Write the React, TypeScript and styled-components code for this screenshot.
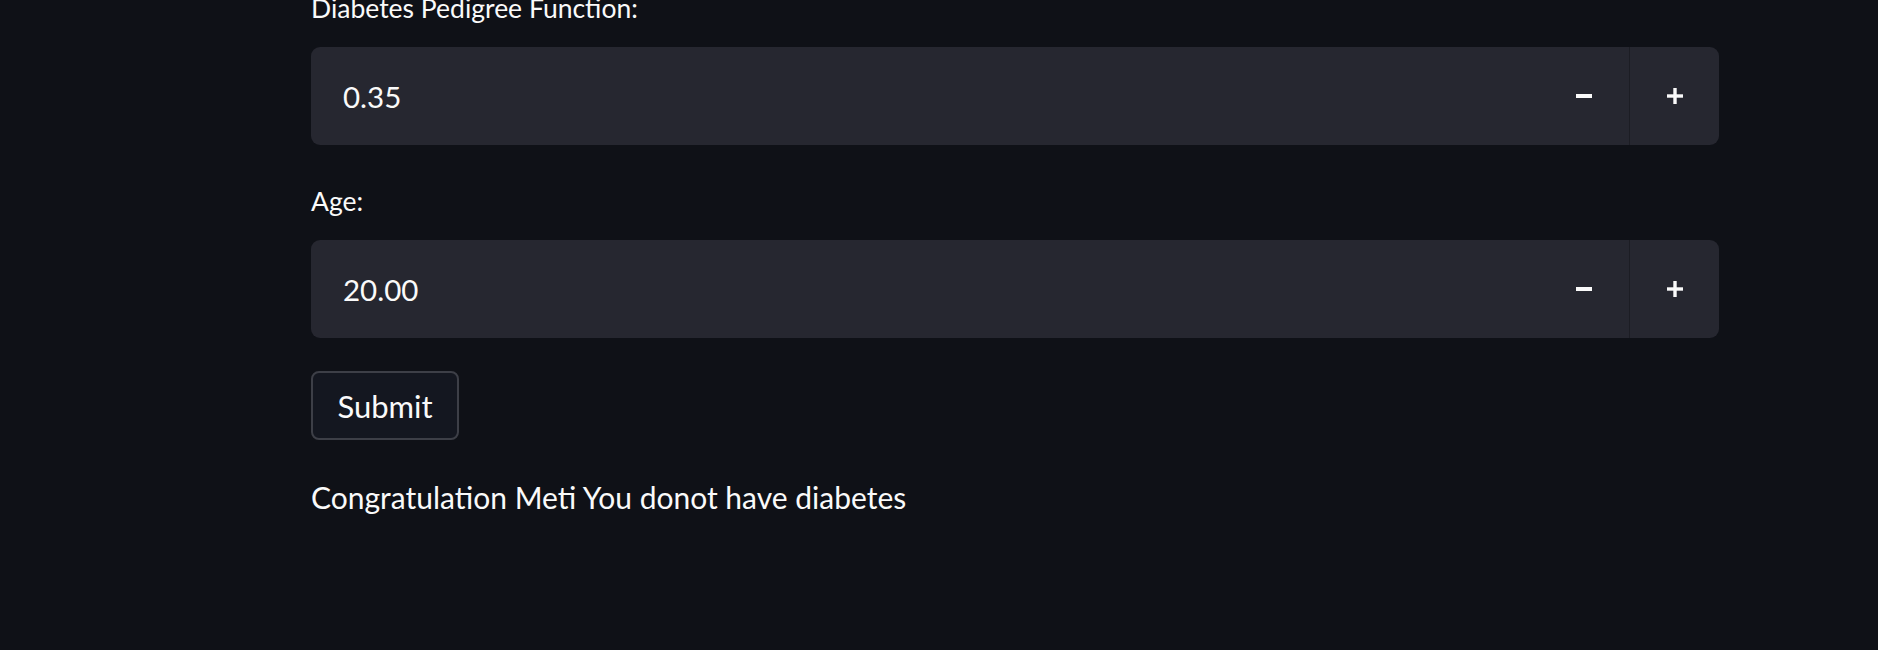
import { createGlobalStyle } from "styled-components"
import styled from "styled-components"

const GlobalStyle = createGlobalStyle`
  html, body {
    margin: 0;
    padding: 0;
    background: #0f1117;
  }
  body {
    font-family: Lato, "Noto Sans", "Liberation Sans", sans-serif;
    color: #fafafa;
    overflow: hidden;
  }
`

const Page = styled.div`
  height: 650px;
  padding: 0 159px 0 311px;
  display: flex;
  flex-direction: column;
  align-items: flex-start;
`

const Field = styled.div`
  width: 100%;
  display: flex;
  flex-direction: column;
  margin-bottom: 42px;

  &:first-child {
    margin-top: -6px;
  }
`

const Label = styled.label`
  font-size: 26.5px;
  line-height: 28px;
  margin-bottom: 25px;
  color: #fafafa;
`

const NumberBox = styled.div`
  display: flex;
  align-items: stretch;
  height: 98px;
  background: #262730;
  border-radius: 9px;
  overflow: hidden;
`

const Value = styled.input`
  flex: 1;
  min-width: 0;
  background: transparent;
  border: none;
  outline: none;
  padding: 0 0 0 32px;
  font-family: inherit;
  font-size: 29.5px;
  color: #fafafa;
`

const StepButton = styled.button<{ $divider?: boolean }>`
  width: 90px;
  display: flex;
  align-items: center;
  justify-content: center;
  background: transparent;
  border: none;
  padding: 0;
  border-left: ${(p) => (p.$divider ? "1px solid #1c1d24" : "none")};
  color: #fafafa;
  cursor: pointer;
`

const SubmitButton = styled.button`
  margin-top: -9px;
  width: 148px;
  height: 69px;
  background: #141720;
  border: 2px solid #3d3f47;
  border-radius: 8px;
  font-family: inherit;
  font-size: 31px;
  color: #fafafa;
  padding: 0;
  cursor: pointer;
`

const Result = styled.p`
  margin: 42px 0 0;
  font-size: 30px;
  line-height: 30px;
  color: #fafafa;
`

const Minus = () => (
  <svg width="16" height="16" viewBox="0 0 16 16">
    <rect x="0" y="6" width="16" height="4" fill="currentColor" />
  </svg>
)

const Plus = () => (
  <svg width="16" height="16" viewBox="0 0 16 16">
    <rect x="0" y="6.3" width="16" height="3.4" fill="currentColor" />
    <rect x="6.3" y="0" width="3.4" height="16" fill="currentColor" />
  </svg>
)

function NumberField({ label, value }: { label: string; value: string }) {
  return (
    <Field>
      <Label>{label}</Label>
      <NumberBox>
        <Value type="text" defaultValue={value} />
        <StepButton aria-label="decrement">
          <Minus />
        </StepButton>
        <StepButton $divider aria-label="increment">
          <Plus />
        </StepButton>
      </NumberBox>
    </Field>
  )
}

export default function App() {
  return (
    <Page>
      <GlobalStyle />
      <NumberField label="Diabetes Pedigree Function:" value="0.35" />
      <NumberField label="Age:" value="20.00" />
      <SubmitButton>Submit</SubmitButton>
      <Result>Congratulation Meti You donot have diabetes</Result>
    </Page>
  )
}
